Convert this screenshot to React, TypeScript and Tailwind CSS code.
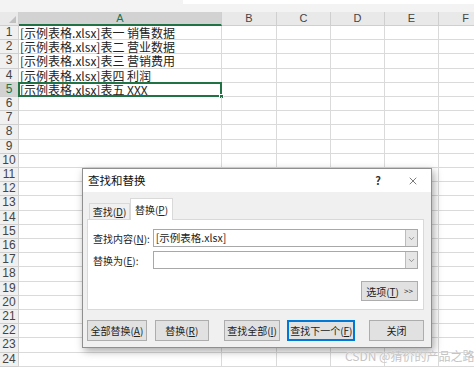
import { X, ChevronDown } from "lucide-react";

const cols = ["A", "B", "C", "D", "E", "F"];

const cellText: Record<number, string> = {
  1: "[示例表格.xlsx]表一 销售数据",
  2: "[示例表格.xlsx]表二 营业数据",
  3: "[示例表格.xlsx]表三 营销费用",
  4: "[示例表格.xlsx]表四 利润",
  5: "[示例表格.xlsx]表五 XXX",
};

const rows = Array.from({ length: 24 }, (_, i) => i + 1);

function Acc({ label, k, tail = "" }: { label: string; k: string; tail?: string }) {
  return (
    <span className="whitespace-nowrap">
      {label}(<span className="underline underline-offset-1">{k}</span>){tail}
    </span>
  );
}

function Select({ value }: { value?: string }) {
  return (
    <div className="flex h-[18px] w-[266px] border border-[#a8a8a8] bg-white">
      <div className="flex-1 px-[2px] leading-[16px] text-[10.5px] text-[#222]">{value}</div>
      <div className="flex w-[12px] items-center justify-center border-l border-[#bcbcbc] bg-[#e6e6e6]">
        <ChevronDown className="h-[9px] w-[9px] text-[#555]" strokeWidth={1.5} />
      </div>
    </div>
  );
}

function Btn({ children, w, primary }: { children: React.ReactNode; w: string; primary?: boolean }) {
  return (
    <div
      className={`flex h-[21px] items-center justify-center whitespace-nowrap bg-[#e1e1e1] text-[10px] text-[#222] ${w} ${
        primary ? "border-2 border-[#0078d7]" : "border border-[#adadad]"
      }`}
    >
      {children}
    </div>
  );
}

export default function App() {
  return (
    <div
      className="relative h-[367px] w-[474px] overflow-hidden bg-white"
      style={{ fontFamily: '"Noto Sans CJK SC", "Noto Sans", sans-serif' }}
    >
      {/* strip above the sheet */}
      <div className="flex h-[12px] bg-[#f3f3f3]">
        <div className="w-[183px]" />
        <div className="h-[4px] flex-1 bg-white" />
      </div>

      {/* column headers */}
      <div className="grid h-[14px] grid-cols-[19px_203px_55px_54px_54px_54px_54px] bg-[#e9e9e9] font-['Liberation_Sans',sans-serif] text-[11px] leading-[12px] text-[#444]">
        <div className="relative border-r border-b border-[#cfcfcf]">
          <div className="absolute bottom-[2px] right-[2px] h-[7px] w-[7px] bg-[#c0c0c0] [clip-path:polygon(100%_0,100%_100%,0_100%)]" />
        </div>
        {cols.map((c) => (
          <div
            key={c}
            className={`text-center border-r border-[#cfcfcf] ${
              c === "A" ? "border-b-2 border-b-[#217346] bg-[#d2d2d2] text-[#217346]" : "border-b border-b-[#cfcfcf]"
            }`}
          >
            {c}
          </div>
        ))}
      </div>

      {/* rows */}
      {rows.map((r) => (
        <div
          key={r}
          className="grid h-[14.21px] grid-cols-[19px_203px_55px_54px_54px_54px_54px] text-[12px] leading-[13px]"
        >
          <div
            className={`border-r border-b border-[#cfcfcf] text-center font-['Liberation_Sans',sans-serif] text-[12px] text-[#444] ${
              r === 5 ? "bg-[#d2d2d2] text-[#217346]" : "bg-[#f0f0f0]"
            }`}
          >
            {r}
          </div>
          <div className="relative whitespace-nowrap pl-[1px] text-[#222] border-r border-b border-[#dadada]">
            {cellText[r]}
            {r === 5 && (
              <>
                <div className="absolute -left-[1px] -top-[1px] -right-[1px] -bottom-[1px] border-2 border-[#217346]" />
                <div className="absolute -bottom-[3px] -right-[3px] h-[5px] w-[5px] border border-white bg-[#217346]" />
              </>
            )}
          </div>
          {cols.slice(1).map((c) => (
            <div key={c} className="border-r border-b border-[#dadada]" />
          ))}
        </div>
      ))}

      {/* find & replace dialog */}
      <div className="absolute left-[82px] top-[168px] flex h-[180px] w-[350px] flex-col border border-[#8f8f8f] bg-[#f0f0f0] shadow-[2px_3px_8px_rgba(0,0,0,0.35)]">
        <div className="flex h-[23px] items-center bg-white pl-[5px] pr-[12px] text-[11.5px] text-[#111]">
          <span className="flex-1">查找和替换</span>
          <span className="mr-[26px] text-[11px] font-bold text-[#333]">?</span>
          <X className="h-[12px] w-[12px] text-[#222]" strokeWidth={1.2} />
        </div>

        <div className="flex flex-1 flex-col pl-[4px] pr-[7px] pt-[6px]">
          {/* tabs */}
          <div className="flex h-[21px] items-end text-[10px] text-[#222]">
            <div className="ml-[2px] flex h-[16px] w-[41px] items-center justify-center border border-b-0 border-[#d9d9d9] bg-[#f0f0f0]">
              <Acc label="查找" k="D" />
            </div>
            <div className="relative -mb-px flex h-[22px] w-[43px] items-center justify-center border border-b-0 border-[#d9d9d9] bg-white">
              <Acc label="替换" k="P" />
            </div>
          </div>

          {/* panel */}
          <div className="flex h-[91px] flex-col border border-[#d9d9d9] bg-white pl-[5px] pr-[5px] pt-[9px] text-[10px] text-[#222]">
            <div className="flex items-center">
              <div className="w-[60px] whitespace-nowrap">
                <Acc label="查找内容" k="N" tail=":" />
              </div>
              <Select value="[示例表格.xlsx]" />
            </div>
            <div className="mt-[4px] flex items-center">
              <div className="w-[60px] whitespace-nowrap">
                <Acc label="替换为" k="E" tail=":" />
              </div>
              <Select />
            </div>
            <div className="mt-[12px] flex justify-end">
              <div className="flex h-[20px] w-[57px] items-center justify-center whitespace-nowrap border border-[#adadad] bg-[#e1e1e1]">
                <Acc label="选项" k="T" />
                <span className="ml-[5px] text-[8px]">&gt;&gt;</span>
              </div>
            </div>
          </div>

          {/* bottom buttons */}
          <div className="mt-[10px] flex">
            <Btn w="w-[60px]">
              <Acc label="全部替换" k="A" />
            </Btn>
            <div className="w-[8px]" />
            <Btn w="w-[54px]">
              <Acc label="替换" k="R" />
            </Btn>
            <div className="w-[15px]" />
            <Btn w="w-[57px]">
              <Acc label="查找全部" k="I" />
            </Btn>
            <div className="w-[7px]" />
            <Btn w="w-[68px]" primary>
              <Acc label="查找下一个" k="F" />
            </Btn>
            <div className="w-[14px]" />
            <Btn w="w-[55px]">关闭</Btn>
          </div>
        </div>
      </div>

      {/* watermark */}
      <div className="absolute left-[345px] top-[349px] whitespace-nowrap text-[12px] leading-[14px] text-[#c4c4c4] [text-shadow:0_0_1px_#fff]">
        CSDN @猜价的产品之路
      </div>
    </div>
  );
}
